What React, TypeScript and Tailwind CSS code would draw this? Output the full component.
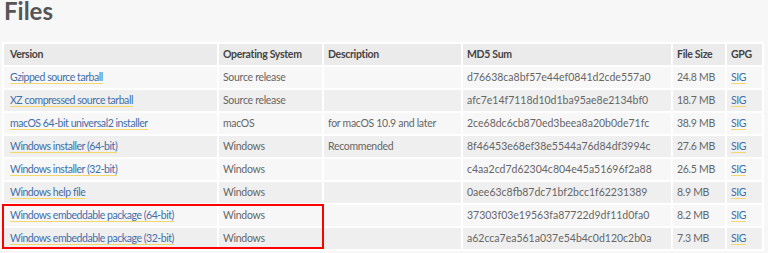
const rows = [
  { v: 'Gzipped source tarball', os: 'Source release', d: '', md5: 'd76638ca8bf57e44ef0841d2cde557a0', size: '24.8 MB' },
  { v: 'XZ compressed source tarball', os: 'Source release', d: '', md5: 'afc7e14f7118d10d1ba95ae8e2134bf0', size: '18.7 MB' },
  { v: 'macOS 64-bit universal2 installer', os: 'macOS', d: 'for macOS 10.9 and later', md5: '2ce68dc6cb870ed3beea8a20b0de71fc', size: '38.9 MB' },
  { v: 'Windows installer (64-bit)', os: 'Windows', d: 'Recommended', md5: '8f46453e68ef38e5544a76d84df3994c', size: '27.6 MB' },
  { v: 'Windows installer (32-bit)', os: 'Windows', d: '', md5: 'c4aa2cd7d62304c804e45a51696f2a88', size: '26.5 MB' },
  { v: 'Windows help file', os: 'Windows', d: '', md5: '0aee63c8fb87dc71bf2bcc1f62231389', size: '8.9 MB' },
  { v: 'Windows embeddable package (64-bit)', os: 'Windows', d: '', md5: '37303f03e19563fa87722d9df11d0fa0', size: '8.2 MB' },
  { v: 'Windows embeddable package (32-bit)', os: 'Windows', d: '', md5: 'a62cca7ea561a037e54b4c0d120c2b0a', size: '7.3 MB' },
];

const cell = 'h-[23px] px-[4px] border-2 border-white text-left align-middle whitespace-nowrap';
const first = 'h-[23px] pl-[6px] pr-[4px] border-2 border-white text-left align-middle whitespace-nowrap';
const link = 'text-[#3f6ea8] border-b border-[#f3d768] tracking-[-0.45px]';

export default function App() {
  return (
    <div className="w-[768px] h-[253px] overflow-hidden bg-[#f7f7f7] font-['Lato',sans-serif] text-[10.5px] tracking-[-0.3px] text-[#666]">
      <h1 className="h-[42px] pl-[4px] text-[24px] leading-[22px] tracking-normal font-bold text-[#555]">Files</h1>
      <div className="relative ml-[2px]">
        <table className="w-[760px] border-collapse table-fixed">
          <colgroup>
            <col className="w-[215px]" />
            <col className="w-[105px]" />
            <col className="w-[139px]" />
            <col className="w-[210px]" />
            <col className="w-[54px]" />
            <col className="w-[37px]" />
          </colgroup>
          <thead>
            <tr className="bg-[#ebebeb] text-[#444] font-bold">
              <th className={first}>Version</th>
              <th className={cell}>Operating System</th>
              <th className={cell}>Description</th>
              <th className={cell}>MD5 Sum</th>
              <th className={cell}>File Size</th>
              <th className={cell}>GPG</th>
            </tr>
          </thead>
          <tbody>
            {rows.map((r, i) => (
              <tr key={r.v} className={i % 2 === 0 ? 'bg-[#f7f7f7]' : 'bg-[#efefef]'}>
                <td className={first}>
                  <a className={link}>{r.v}</a>
                </td>
                <td className={cell}>{r.os}</td>
                <td className={cell}>{r.d}</td>
                <td className={cell + ' tracking-normal'}>{r.md5}</td>
                <td className={cell}>{r.size}</td>
                <td className={cell}>
                  <a className={link}>SIG</a>
                </td>
              </tr>
            ))}
          </tbody>
        </table>
        <div className="absolute left-0 top-[162px] w-[322px] h-[45px] border-2 border-[#ff0000]" />
      </div>
    </div>
  );
}
